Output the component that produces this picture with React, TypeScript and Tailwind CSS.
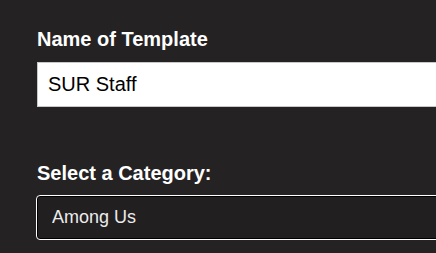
const App = () => {
  return (
    <div
      className="h-[253px] w-full overflow-hidden bg-[#242223] pl-[37px] pt-[28px]"
      style={{ fontFamily: '"Liberation Sans", Arial, sans-serif' }}
    >
      <label className="block text-[20px] font-bold leading-[23px] text-white">Name of Template</label>
      <input
        className="mt-[11px] block h-[45px] w-[520px] border border-[#c8c8c8] bg-white pl-[10px] text-[20px] text-black outline-none"
        type="text"
        defaultValue="SUR Staff"
      />

      <label className="mt-[55px] block text-[20px] font-bold leading-[23px] text-white">Select a Category:</label>
      <select
        className="-ml-px mt-[10px] block h-[45px] w-[520px] appearance-none rounded-[4px] border border-white bg-[#211f20] pl-[15px] text-[18px] text-[#ececec] shadow-[inset_0_0_0_1px_#000] outline-none"
        defaultValue="among"
      >
        <option value="among">Among Us</option>
      </select>
    </div>
  );
};

export default App;
